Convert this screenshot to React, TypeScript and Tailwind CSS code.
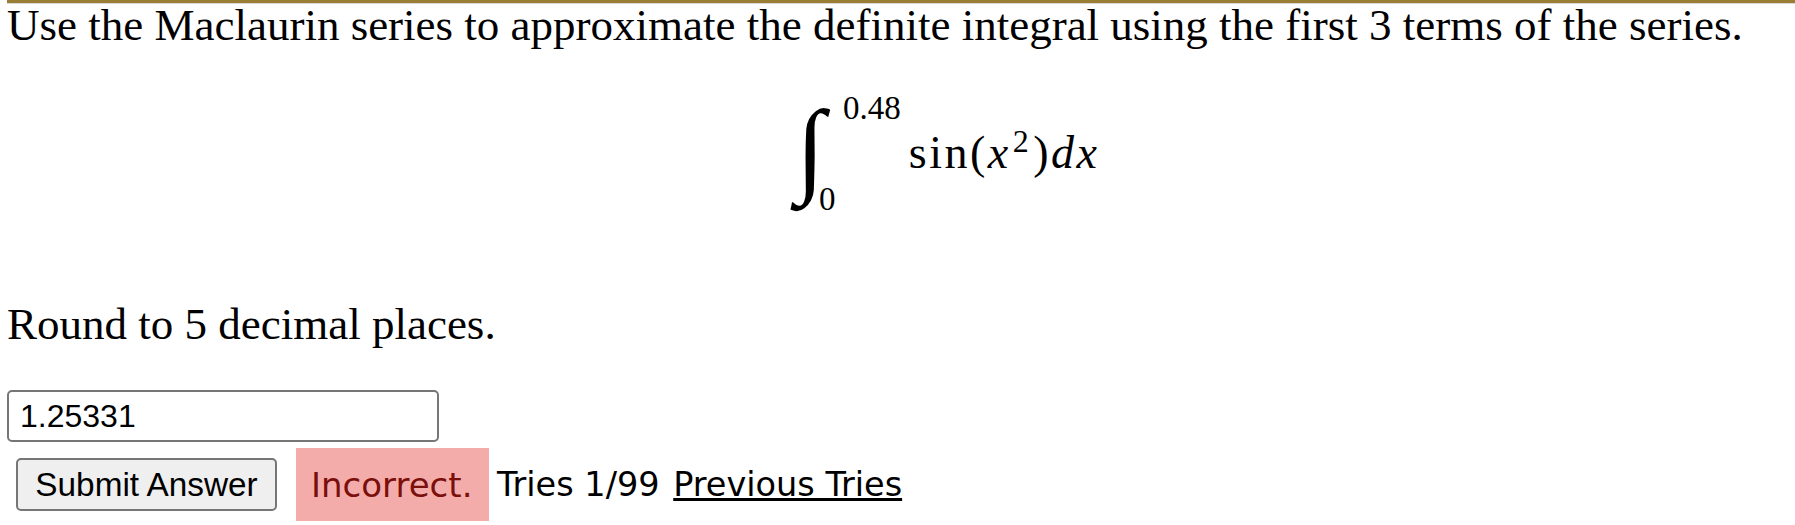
export default function App() {
  return (
    <div className="min-h-[525px] bg-white text-black font-['Liberation_Serif',serif]">
      <div className="ml-[7px] h-[3px] bg-[#9a7d34]" />
      <div className="ml-[7px] h-px bg-[#d9d9d9]" />
      <div className="px-[7px]">
        <p className="text-[45px] leading-[42px] whitespace-nowrap">
          Use the Maclaurin series to approximate the definite integral using the first 3 terms of the series.
        </p>
        <div className="h-[252px] pt-[49px] pl-[789px] flex items-start">
          <span className="text-[105px] leading-[105px] w-[20px]">∫</span>
          <div className="flex flex-col h-[124px] -mt-[3px] text-[33px] leading-[33px]">
            <span className="ml-[27px]">0.48</span>
            <span className="mt-auto ml-[3px]">0</span>
          </div>
          <span className="ml-[8px] mt-[32px] text-[46px] leading-[52px] tracking-[2.5px] whitespace-nowrap">
            sin(<i>x</i>
            <sup className="text-[32px] ml-[2px] mr-[2px]">2</sup>)<i>dx</i>
          </span>
        </div>
        <p className="text-[45px] leading-[52px]">Round to 5 decimal places.</p>
        <div className="mt-[40px] font-['Liberation_Sans',sans-serif]">
          <input
            readOnly
            value="1.25331"
            className="block w-[432px] h-[52px] border-2 border-[#767676] rounded-[5px] px-[11px] text-[32px] outline-none"
          />
          <div className="flex items-center mt-[6px]">
            <button className="ml-[9px] w-[261px] h-[53px] border-2 border-[#767676] rounded-[5px] bg-[#efefef] text-[33.33px]">
              Submit Answer
            </button>
            <span className="ml-[19px] w-[193px] h-[73px] pl-[15px] pt-[1px] bg-[#f4acaa] text-[#7a0f0c] flex items-center text-[34px] font-['DejaVu_Sans',sans-serif]">
              Incorrect.
            </span>
            <span className="ml-2 pt-[2px] text-[33.5px] whitespace-nowrap font-['DejaVu_Sans',sans-serif]">
              Tries 1/99 <a className="ml-[3px] underline">Previous Tries</a>
            </span>
          </div>
        </div>
      </div>
    </div>
  );
}
